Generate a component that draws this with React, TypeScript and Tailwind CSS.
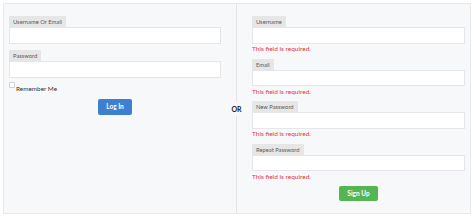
const font = { fontFamily: 'Lato, "Open Sans", sans-serif' };

function Chip({ children }: { children: React.ReactNode }) {
  return (
    <div className="flex">
      <span className="h-[11px] px-[4px] bg-[#e6e6e6] text-[#5a5a5a] text-[5.8px] leading-[11px] rounded-t-[1px]">
        {children}
      </span>
    </div>
  );
}

function Input({ type = 'text' }: { type?: string }) {
  return <input type={type} className="block w-full h-[17px] bg-white border border-[#e4e6e9] outline-none" />;
}

function Field({ label, type }: { label: string; type?: string }) {
  return (
    <div>
      <Chip>{label}</Chip>
      <div className="h-[16.5px]">
        <input type={type ?? 'text'} className="block w-full h-full bg-white border border-[#e4e6e9] outline-none" />
      </div>
      <div className="h-[15px] pt-[0.5px] text-[6.5px] leading-[9px] text-[#e0383c]">This field is required.</div>
    </div>
  );
}

export default function App() {
  return (
    <div className="w-[474px] h-[217px] bg-white p-[3px]" style={font}>
      <div className="flex h-[211px] bg-[#f7f8fa] border border-[#e8eaed]">
        {/* Log in */}
        <div className="w-[232px] pl-[5px] pr-[15px] pt-[12px]">
          <Chip>Username Or Email</Chip>
          <Input />
          <div className="mt-[6px]">
            <Chip>Password</Chip>
            <Input type="password" />
          </div>
          <label className="mt-[5px] flex items-start gap-[1px] text-[6.4px] leading-[10px] text-[#333]">
            <span className="mt-[-1px] w-[6px] h-[6px] bg-white border border-[#cfd2d6] rounded-[1px]" />
            <span className="mt-[1px]">Remember Me</span>
          </label>
          <div className="mt-[5px] flex justify-center">
            <button className="w-[34px] h-[16px] rounded-[2px] bg-[#3f7fcf] text-white text-[6.5px] font-bold leading-[16px]">
              Log In
            </button>
          </div>
        </div>

        {/* Divider */}
        <div className="w-px flex flex-col items-center">
          <div className="flex-1 w-px bg-[#e3e5e8]" />
          <span className="py-[3px] bg-[#f7f8fa] text-[7px] leading-[8px] font-bold text-[#222] whitespace-nowrap">OR</span>
          <div className="flex-1 w-px bg-[#e3e5e8]" />
        </div>

        {/* Sign up */}
        <div className="flex-1 pl-[15px] pr-[5px] pt-[12px]">
          <Field label="Username" />
          <Field label="Email" />
          <Field label="New Password" type="password" />
          <Field label="Repeat Password" type="password" />
          <div className="flex justify-center">
            <button className="w-[39px] h-[15px] rounded-[2px] bg-[#54b552] text-white text-[6.5px] font-bold leading-[15px]">
              Sign Up
            </button>
          </div>
        </div>
      </div>
    </div>
  );
}
